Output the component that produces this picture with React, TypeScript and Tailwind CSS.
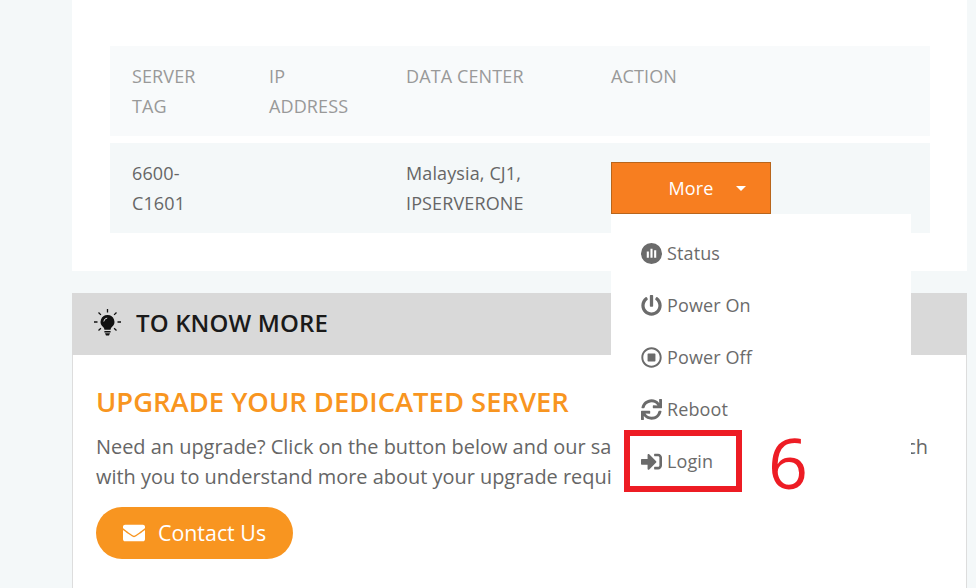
import React from 'react';
import { FaEnvelope, FaPowerOff, FaRegStopCircle, FaSignInAlt, FaSync } from 'react-icons/fa';

function StatusIcon() {
  return (
    <svg viewBox="0 0 20 20" className="h-[21px] w-[21px]" fill="currentColor">
      <path
        fillRule="evenodd"
        d="M10 0a10 10 0 1 0 0 20a10 10 0 0 0 0-20ZM5.5 8h2v6h-2ZM9 5.5h2V14H9ZM12.5 7h2v7h-2Z"
      />
    </svg>
  );
}

function BulbIcon() {
  return (
    <svg viewBox="0 0 28 28" className="h-[28px] w-[28px]" fill="#111" stroke="#111">
      <path
        fill="none"
        strokeWidth="1.3"
        d="M13.5 0v3.5M4.5 3.5l2.4 2.4M22.5 3.5l-2.4 2.4M0 13h3.5M23.5 13h3.5M4.5 21.5l2.4-2.2M22.5 21.5l-2.4-2.2"
      />
      <path
        stroke="none"
        d="M13.5 6a6.8 6.8 0 0 0-4.2 12.2c.8.7 1 1.5 1.1 2.6h6.2c.1-1.1.3-1.9 1.1-2.6A6.8 6.8 0 0 0 13.5 6Z"
      />
      <path stroke="none" d="M10.4 22h6.2v1.4h-6.2ZM11 24.2h5l-1 2.3h-3Z" />
      <path fill="none" stroke="#d9d9d9" strokeWidth="1" d="M9.8 12.5a3.8 3.8 0 0 1 3.4-3.4" />
    </svg>
  );
}

const menuItems = [
  { label: 'Status', icon: <StatusIcon /> },
  { label: 'Power On', icon: <FaPowerOff className="h-[21px] w-[21px]" /> },
  { label: 'Power Off', icon: <FaRegStopCircle className="h-[21px] w-[21px]" /> },
  { label: 'Reboot', icon: <FaSync className="h-[21px] w-[21px]" /> },
  { label: 'Login', icon: <FaSignInAlt className="h-[21px] w-[21px]" /> },
];

export default function App() {
  return (
    <div className="relative h-[588px] w-[976px] overflow-hidden bg-[#f4f8f9] pl-[72px] pr-[9px] font-['Open_Sans',sans-serif] text-[18px] leading-[30px] tracking-[0.12px] text-[#666]">
      <div className="bg-white pb-[38px] pl-[38px] pr-[37px] pt-[46px]">
        <div className="grid h-[90px] grid-cols-[137px_137px_205px_1fr] bg-[#f8fafb] py-[15px] pl-[22px] text-[#999]">
          <div>SERVER<br />TAG</div>
          <div>IP<br />ADDRESS</div>
          <div>DATA CENTER</div>
          <div>ACTION</div>
        </div>
        <div className="mt-[7px] grid h-[90px] grid-cols-[137px_137px_205px_1fr] bg-[#f4f8f9] py-[15px] pl-[22px]">
          <div>6600-<br />C1601</div>
          <div></div>
          <div>Malaysia, CJ1,<br />IPSERVERONE</div>
          <div className="relative">
            <button className="relative mt-[4px] flex h-[52px] w-[160px] items-center justify-center border border-[#b8651c] bg-[#f77e20] text-white">
              <span>More</span>
              <span className="absolute left-[124px] top-[23px] h-0 w-0 border-x-[5px] border-t-[5px] border-x-transparent border-t-white"></span>
            </button>
            <div className="absolute left-0 top-[56px] z-10 w-[300px] bg-white pb-[5px] pt-[13px]">
              {menuItems.map((item) => (
                <div key={item.label} className="flex h-[52px] items-center gap-[5px] pl-[30px] text-[#6b6b6b]">
                  {item.icon}
                  <span>{item.label}</span>
                </div>
              ))}
            </div>
          </div>
        </div>
      </div>

      <div className="mt-[22px] h-[400px] border-x border-[#ddd] bg-white">
        <div className="-mx-px flex h-[62px] items-center gap-[14px] bg-[#d9d9d9] pb-[2px] pl-[22px] text-[24px] font-semibold tracking-[0.15px] text-[#1a1a1a]">
          <BulbIcon />
          <span>TO KNOW MORE</span>
        </div>
        <div className="pl-[23px] pr-[24px] pt-[29px]">
          <h2 className="text-[27.4px] font-semibold leading-[36px] tracking-normal text-[#f89520]">UPGRADE YOUR DEDICATED SERVER</h2>
          <p className="mt-[12px] w-[840px] text-[19.93px] tracking-normal text-[#666]">
            Need an upgrade? Click on the button below and our sales representative will get in touch with you to understand more about your upgrade requirements.
          </p>
          <button className="mt-[15px] flex h-[52px] w-[197px] items-center justify-center gap-[13px] rounded-full bg-[#f89520] text-[21.4px] tracking-normal text-white">
            <FaEnvelope className="h-[22px] w-[22px]" />
            <span>Contact Us</span>
          </button>
        </div>
      </div>

      {/* annotation drawn on top of the screenshot */}
      <div className="absolute left-[624px] top-[430px] z-20 h-[62px] w-[118px] border-[6px] border-[#ed1c24]"></div>
      <div className="absolute left-[768px] top-[422px] z-20 text-[70px] leading-[80px] tracking-normal text-[#ed1c24]">6</div>
    </div>
  );
}
